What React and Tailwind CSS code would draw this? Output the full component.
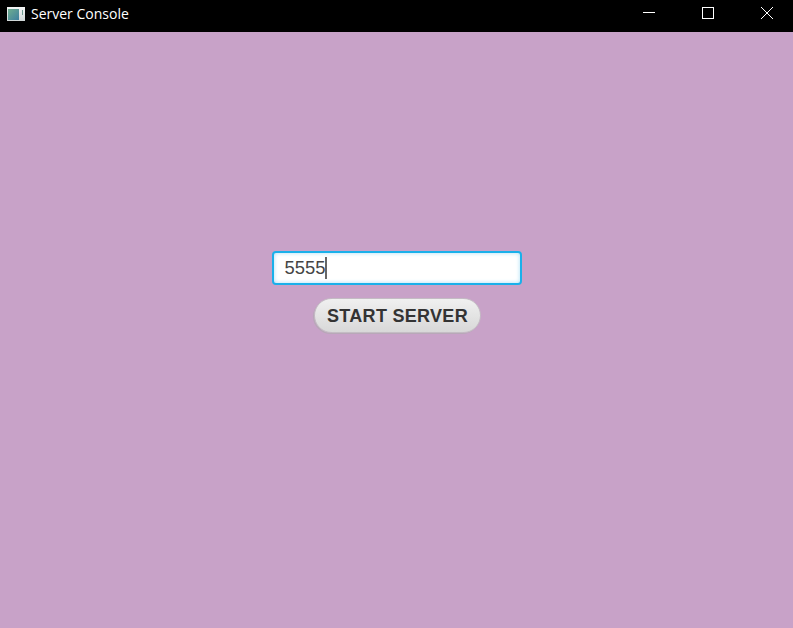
export default function App() {
  return (
    <div className="w-[793px] h-[628px] flex flex-col bg-[#c8a2c8] overflow-hidden font-['Liberation_Sans',Arial,sans-serif]">
      <header className="h-8 bg-black flex items-center shrink-0">
        <svg width="18" height="14" viewBox="0 0 18 14" className="ml-[7px] mb-[5px] shrink-0">
          <defs>
            <linearGradient id="g" x1="0" y1="0" x2="1" y2="1">
              <stop offset="0" stopColor="#6fae8f" />
              <stop offset="1" stopColor="#3f7f9f" />
            </linearGradient>
            <linearGradient id="h" x1="0" y1="0" x2="0" y2="1">
              <stop offset="0" stopColor="#f4f6f6" />
              <stop offset="1" stopColor="#cfd6d6" />
            </linearGradient>
          </defs>
          <rect x="0" y="0" width="18" height="14" fill="url(#h)" />
          <rect x="1" y="2" width="11" height="11" fill="url(#g)" />
          <rect x="15" y="3" width="1" height="5" fill="#6f9a90" />
        </svg>
        <span className="ml-[6px] mb-[4px] text-[14px] leading-5 text-white font-['Open_Sans',sans-serif]">Server Console</span>
        <div className="ml-auto -mr-[3px] flex h-full">
          <button className="w-[59px] flex items-center justify-center pb-[7px]">
            <svg width="12" height="1" viewBox="0 0 12 1"><rect width="12" height="1" fill="#fff" /></svg>
          </button>
          <button className="w-[59px] flex items-center justify-center pb-[7px]">
            <svg width="12" height="12" viewBox="0 0 12 12"><rect x="0.5" y="0.5" width="11" height="11" fill="none" stroke="#fff" /></svg>
          </button>
          <button className="w-[59px] flex items-center justify-center pb-[7px]">
            <svg width="14" height="14" viewBox="0 0 14 14"><path d="M1 1 L13 13 M13 1 L1 13" stroke="#fff" strokeWidth="1" fill="none" /></svg>
          </button>
        </div>
      </header>
      <main className="flex flex-col items-center pt-[219px]">
        <div className="w-[250px] h-[34px] rounded-[4px] border-2 border-[#1ab0ea] bg-white shadow-[inset_0_0_4px_#a9dff5] flex items-center pl-[10px] text-[18.4px] text-[#444] font-['Liberation_Sans',Arial,sans-serif]">
          <span className="ml-px">5555</span>
          <span className="w-[1.5px] h-[22px] bg-[#666]" />
        </div>
        <button className="mt-[13px] w-[167px] h-[35px] pt-px rounded-full border border-[#c4bcc4] bg-gradient-to-b from-[#f0f0f0] to-[#d8d8d8] shadow-[-1px_1px_0_#b8a8b8] text-[18px] font-bold text-[#333] tracking-[0.3px] flex items-center justify-center ml-[2px]">START SERVER</button>
      </main>
    </div>
  );
}
